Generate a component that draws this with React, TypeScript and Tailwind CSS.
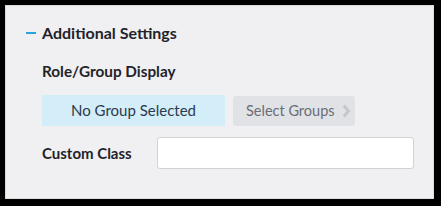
export default function App() {
	return (
		<div className="h-[206px] w-[441px] bg-black pt-[5px] pl-[5px] font-['Lato',sans-serif]">
			<div className="h-[194px] w-[429px] border border-[#dcdcdf] bg-[#f0f0f2]">
				<div className="mt-[17px] ml-[20px] flex h-[20px] items-center">
					<span className="mr-[6px] h-[2px] w-[10px] bg-[#29a3e0]" />
					<span className="text-[16px] font-bold leading-[20px] text-[#1f2329]">
						Additional Settings
					</span>
				</div>
				<div className="ml-[36px]">
					<div className="mt-[18px] text-[15.3px] font-bold leading-[20px] text-[#1f2329]">
						Role/Group Display
					</div>
					<div className="mt-[14px] flex items-center gap-[8px]">
						<div className="flex h-[31px] w-[183px] items-center justify-center bg-[#d4eef9] text-[15px] text-[#2c3a4d]">
							No Group Selected
						</div>
						<button className="flex h-[30px] w-[122px] items-center gap-[7px] rounded-[3px] bg-[#e1e2e6] pl-[13px] text-[14.5px] text-[#6a6d74]">
							Select Groups
							<svg width="9" height="14" viewBox="0 0 9 14" className="text-[#c6c7cc]">
								<path d="M1.8 1.5 L6.5 7 L1.8 12.5" fill="none" stroke="currentColor" strokeWidth="3" />
							</svg>
						</button>
					</div>
					<div className="mt-[11px] flex items-center">
						<label className="w-[115px] text-[15px] font-bold leading-[20px] text-[#1f2329]">
							Custom Class
						</label>
						<input
							className="h-[32px] w-[257px] rounded-[3px] border border-[#d2d2d6] bg-white px-2 outline-none"
							type="text"
						/>
					</div>
				</div>
			</div>
		</div>
	);
}
